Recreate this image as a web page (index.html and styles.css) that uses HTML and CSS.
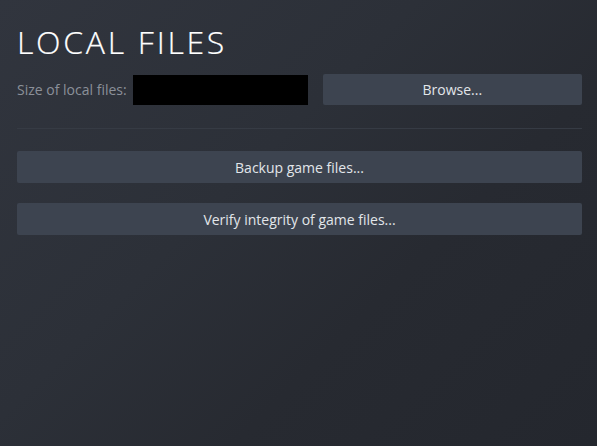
FILE: index.html
```html
<!DOCTYPE html>
<html>
<head>
<meta charset="utf-8">
<link rel="stylesheet" href="styles.css">
</head>
<body>
<div class="page">
  <h1 class="title">LOCAL FILES</h1>
  <div class="size-row">
    <span class="size-label">Size of local files:</span>
    <span class="size-value"></span>
    <button class="btn btn-browse">Browse...</button>
  </div>
  <div class="separator"></div>
  <div class="actions">
    <button class="btn btn-wide">Backup game files...</button>
    <button class="btn btn-wide">Verify integrity of game files...</button>
  </div>
</div>
</body>
</html>
```

FILE: styles.css
```css
html, body {
  margin: 0;
  padding: 0;
  height: 100%;
}
body {
  background: linear-gradient(135deg, #31353e 0%, #2c3038 40%, #272a31 65%, #24272e 100%);
  font-family: "Open Sans", "Noto Sans", sans-serif;
  overflow: hidden;
}
.page {
  padding: 22px 15px 0 17px;
}
.title {
  margin: 0;
  font-family: "Open Sans", sans-serif;
  font-weight: 300;
  font-size: 32px;
  line-height: 40px;
  letter-spacing: 2.7px;
  color: #ffffff;
  -webkit-text-stroke: 0.2px #ffffff;
}
.size-row {
  display: flex;
  align-items: center;
  margin-top: 12px;
  height: 31px;
}
.size-label {
  color: #8b9099;
  font-size: 14px;
  margin-right: 6px;
}
.size-value {
  width: 175px;
  height: 30px;
  background: #000;
}
.btn {
  border: none;
  border-radius: 2px;
  background: #3d4450;
  color: #e2e6ea;
  font-family: "Open Sans", "Noto Sans", sans-serif;
  font-size: 14px;
  padding: 0;
  cursor: pointer;
}
.btn-browse {
  flex: 1;
  height: 31px;
  margin-left: 15px;
}
.separator {
  height: 1px;
  background: #363b44;
  margin-top: 23px;
}
.actions {
  display: flex;
  flex-direction: column;
  gap: 20px;
  margin-top: 22px;
}
.btn-wide {
  height: 32px;
  width: 100%;
}
```
